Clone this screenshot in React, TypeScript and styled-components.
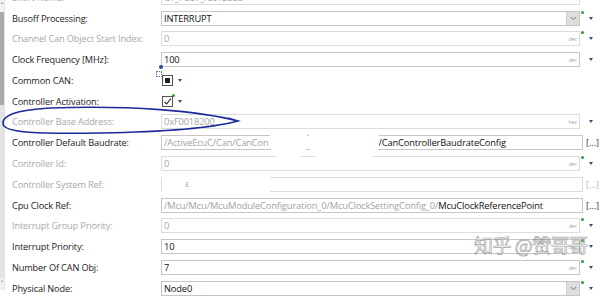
import React from 'react'
import styled, { createGlobalStyle } from 'styled-components'

const GlobalStyle = createGlobalStyle`
    html, body {
        margin: 0;
        padding: 0;
        background: #ffffff;
    }
    body {
        font-family: 'Open Sans', 'Noto Sans', 'Noto Sans CJK SC', sans-serif;
    }
`

type Kind = 'combo' | 'text' | 'check' | 'ref'

interface IRow {
    label: string
    kind: Kind
    disabled?: boolean
    value?: string
    gap?: number
    tail?: string
    unit?: string
    dot?: boolean
    info?: boolean
    checked?: boolean
}

const rows: IRow[] = [
    { label: 'Short Name:', kind: 'text', disabled: true, value: 'CT_FCCT_rec18b8d' },
    { label: 'Busoff Processing:', kind: 'combo', value: 'INTERRUPT', dot: true },
    { label: 'Channel Can Object Start Index:', kind: 'text', disabled: true, value: '0', unit: 'dec', dot: true },
    { label: 'Clock Frequency [MHz]:', kind: 'text', value: '100', unit: 'dec', info: true },
    { label: 'Common CAN:', kind: 'check', checked: false },
    { label: 'Controller Activation:', kind: 'check', checked: true, dot: true },
    { label: 'Controller Base Address:', kind: 'text', disabled: true, value: '0xF0018200', unit: 'hex' },
    { label: 'Controller Default Baudrate:', kind: 'ref', value: '/ActiveEcuC/Can/CanCon', gap: 110, tail: '/CanControllerBaudrateConfig' },
    { label: 'Controller Id:', kind: 'text', disabled: true, value: '0', unit: 'dec', dot: true },
    { label: 'Controller System Ref:', kind: 'ref', disabled: true, value: '' },
    { label: 'Cpu Clock Ref:', kind: 'ref', value: '/Mcu/Mcu/McuModuleConfiguration_0/McuClockSettingConfig_0/', tail: 'McuClockReferencePoint' },
    { label: 'Interrupt Group Priority:', kind: 'text', disabled: true, value: '0', unit: 'dec', dot: true },
    { label: 'Interrupt Priority:', kind: 'text', value: '10', unit: 'dec', dot: true },
    { label: 'Number Of CAN Obj:', kind: 'text', value: '7', unit: 'dec', dot: true },
    { label: 'Physical Node:', kind: 'combo', value: 'Node0', dot: true }
]

const App = () => (
    <>
        <GlobalStyle />
        <Page>
            <ScrollStrip>
                <ScrollCap>˄</ScrollCap>
                <ScrollThumb />
                <ScrollTrack />
                <ScrollCap>˅</ScrollCap>
            </ScrollStrip>
            <Form>
                {rows.map(r => (
                    <Row key={r.label}>
                        <Label disabled={r.disabled}>{r.label}</Label>
                        <Field row={r} />
                    </Row>
                ))}
            </Form>
            <Annotation width="600" height="301" viewBox="0 0 600 301">
                <path
                    d="M 238 121 C 200 111, 130 105, 50 108 C 14 110, 2 116, 3 124 C 4 133, 40 134, 100 133 C 160 132, 212 128, 238 121 L 228 118"
                    fill="none"
                    stroke="#1c2c9c"
                    strokeWidth="1.6"
                />
            </Annotation>
            <Redact style={{ left: 270, top: 134, width: 37, height: 27 }} />
            <Redact style={{ left: 309, top: 134, width: 70, height: 27 }} />
            <Redact style={{ left: 162, top: 174, width: 108, height: 22, borderRadius: 2 }}>
                <Remnant>£</Remnant>
            </Redact>
            <Watermark>知乎 @赞哥哥</Watermark>
        </Page>
    </>
)

const Field = ({ row }: { row: IRow }) => {
    if (row.kind === 'check') {
        return (
            <CheckCell>
                {!row.checked && <MiniIcon />}
                <CheckBox>
                    {row.checked ? (
                        <svg width="9" height="9" viewBox="0 0 9 9">
                            <path d="M1.5 4.8 L3.6 7 L7.8 1.6" fill="none" stroke="#222" strokeWidth="1.1" />
                        </svg>
                    ) : (
                        <Fill />
                    )}
                    {row.dot && <GreenDot style={{ right: -3, top: -3 }} />}
                </CheckBox>
                <Arrow />
            </CheckCell>
        )
    }
    const muted = row.disabled || row.kind === 'ref'
    return (
        <>
            <InputBox disabled={row.disabled}>
                {row.info && <InfoDot />}
                <Value muted={muted}>
                    {row.value}
                    {row.gap && <Gap style={{ width: row.gap }} />}
                    {row.tail && <Strong>{row.tail}</Strong>}
                </Value>
                {row.unit && <Unit>{row.unit}</Unit>}
                {row.kind === 'combo' && (
                    <ComboBtn>
                        <svg width="7" height="5" viewBox="0 0 7 5">
                            <path d="M0.8 1 L3.5 3.8 L6.2 1" fill="none" stroke="#777" strokeWidth="1" />
                        </svg>
                    </ComboBtn>
                )}
            </InputBox>
            <Side wide={row.kind !== 'ref'}>
                {row.dot && <GreenDot style={{ left: 1, top: 0 }} />}
                {row.kind === 'ref' ? <Ellipsis disabled={row.disabled}>[...]</Ellipsis> : <Arrow />}
            </Side>
        </>
    )
}

export default App

const Page = styled.div`
    position: relative;
    display: flex;
    width: 600px;
    height: 301px;
    overflow: hidden;
    background: #ffffff;
`

const ScrollStrip = styled.div`
    display: flex;
    flex-direction: column;
    width: 4px;
    height: 290px;
    border-right: 1px solid #e2e2e2;
    background: #f2f2f2;
`

const ScrollCap = styled.div`
    height: 12px;
    font-size: 7px;
    line-height: 12px;
    color: #555;
    text-align: center;
    font-family: 'DejaVu Sans', sans-serif;
    overflow: hidden;
`

const ScrollThumb = styled.div`
    height: 93px;
    background: #a9a9a9;
`

const ScrollTrack = styled.div`
    flex: 1;
    background: #e3e3e3;
`

const Form = styled.div`
    display: flex;
    flex-direction: column;
    flex: 1;
    margin-top: -13.2px;
`

const Row = styled.div`
    display: grid;
    grid-template-columns: 156px 1fr auto;
    align-items: center;
    height: 20.8px;
`

const Label = styled.div<{ disabled?: boolean }>`
    padding-left: 7px;
    font-size: 9.2px;
    letter-spacing: -0.15px;
    white-space: nowrap;
    color: ${p => (p.disabled ? '#a9a9a9' : '#1b1b1b')};
`

const InputBox = styled.div<{ disabled?: boolean }>`
    position: relative;
    display: flex;
    align-items: center;
    height: 15px;
    box-sizing: border-box;
    border: 1px solid ${p => (p.disabled ? '#dcdcdc' : '#c6c6c6')};
    background: #ffffff;
`

const Value = styled.div<{ muted?: boolean }>`
    display: flex;
    align-items: center;
    flex: 1;
    padding-left: 2px;
    font-size: 9.3px;
    letter-spacing: -0.15px;
    white-space: nowrap;
    overflow: hidden;
    color: ${p => (p.muted ? '#a4a4a4' : '#111111')};
`

const Gap = styled.span`
    display: inline-block;
    flex-shrink: 0;
`

const Strong = styled.span`
    color: #111;
`

const Unit = styled.div`
    padding-right: 2px;
    font-size: 5px;
    color: #9a9a9a;
`

const ComboBtn = styled.div`
    display: flex;
    align-items: center;
    justify-content: center;
    width: 12px;
    height: 100%;
    background: #dedede;
    border-left: 1px solid #cfcfcf;
`

const InfoDot = styled.div`
    position: absolute;
    left: -3px;
    bottom: -3px;
    width: 4px;
    height: 4px;
    border-radius: 50%;
    background: #2a4e8e;
`

const Side = styled.div<{ wide?: boolean }>`
    position: relative;
    display: flex;
    align-items: center;
    justify-content: flex-end;
    width: ${p => (p.wide ? '20px' : '17px')};
    height: 15px;
    padding-right: ${p => (p.wide ? '7px' : '1px')};
    box-sizing: border-box;
`

const Arrow = styled.div`
    width: 0;
    height: 0;
    border-left: 2.5px solid transparent;
    border-right: 2.5px solid transparent;
    border-top: 3px solid #2b4f86;
`

const GreenDot = styled.div`
    position: absolute;
    width: 3px;
    height: 3px;
    border-radius: 50%;
    background: #2f9a37;
`

const Ellipsis = styled.div<{ disabled?: boolean }>`
    font-size: 9px;
    color: ${p => (p.disabled ? '#b5b5b5' : '#333')};
`

const CheckCell = styled.div`
    position: relative;
    display: flex;
    align-items: center;
    gap: 5px;
    padding-left: 1px;
`

const CheckBox = styled.div`
    position: relative;
    display: flex;
    align-items: center;
    justify-content: center;
    width: 11px;
    height: 11px;
    box-sizing: border-box;
    border: 1px solid #555;
    background: #fff;
`

const Fill = styled.div`
    width: 5px;
    height: 5px;
    background: #222;
`

const MiniIcon = styled.div`
    position: absolute;
    left: -5px;
    top: -4px;
    width: 4px;
    height: 4px;
    border: 1px dotted #4a74c0;
`

const Annotation = styled.svg`
    position: absolute;
    left: 0;
    top: 0;
    pointer-events: none;
`

const Redact = styled.div`
    position: absolute;
    background: #ffffff;
    border-radius: 0 0 18px 18px;
`

const Remnant = styled.span`
    position: absolute;
    left: 23px;
    top: 4px;
    font-size: 8px;
    color: #b0b0b0;
`

const Watermark = styled.div`
    position: absolute;
    left: 474px;
    top: 231px;
    font-family: 'Noto Sans CJK SC', sans-serif;
    font-size: 19px;
    letter-spacing: -0.5px;
    color: rgba(255, 255, 255, 0.55);
    -webkit-text-stroke: 0.7px rgba(130, 130, 130, 0.75);
    pointer-events: none;
`
